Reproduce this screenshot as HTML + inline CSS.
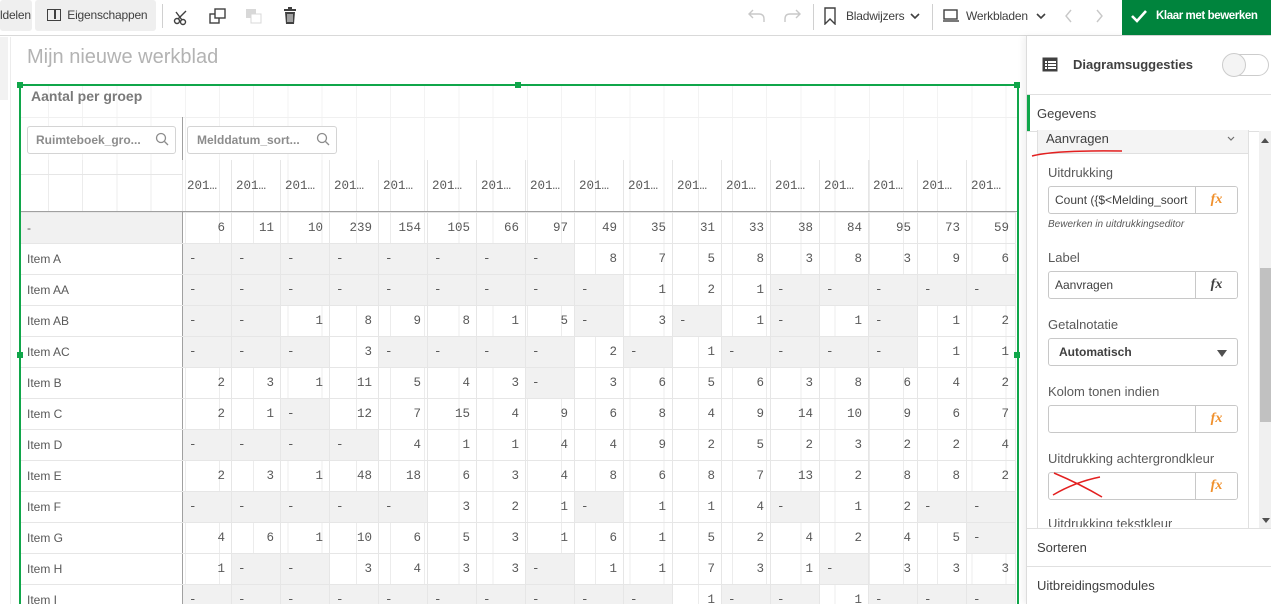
<!DOCTYPE html>
<html><head><meta charset="utf-8">
<style>
*{box-sizing:border-box;margin:0;padding:0}
html,body{width:1271px;height:604px;overflow:hidden}
body{background:#fff;font-family:"Liberation Sans",sans-serif;color:#595959;position:relative}
.abs{position:absolute}
#top{left:0;top:0;width:1271px;height:36px;background:#fff;border-bottom:1px solid #d9d9d9}
.tbtn{position:absolute;top:0;height:31px;background:#efefef;border-radius:3px;font-size:12px;letter-spacing:-0.2px;line-height:31px;color:#404040;white-space:nowrap;overflow:hidden}
#tw{position:absolute;left:20px;top:212px;width:997px;height:392px;overflow:hidden}
#tbl{position:absolute;left:0;top:0;border-collapse:collapse;table-layout:fixed}
#tbl td{height:31px;border:1px solid #e6e6e6;font-family:"Liberation Mono",monospace;font-size:12.5px;text-align:right;padding:0 6px;color:#595959;white-space:nowrap;overflow:hidden}
#tbl td.g{background:#f1f1f1;text-align:left}
#tbl td.n{background:#fff;text-align:left;font-family:"Liberation Sans",sans-serif;font-size:12px;border-right:1px solid #a0a0a0}
#tbl tr.h td.n{background:#f1f1f1}
.hd{position:absolute;top:160px;height:52px;font-family:"Liberation Mono",monospace;font-size:12.5px;line-height:52px;color:#595959;border-left:1px solid #e6e6e6}
.lbl{position:absolute;left:1048px;font-size:13px;color:#595959;white-space:nowrap}
.inp{position:absolute;left:1048px;width:190px;height:28px;border:1px solid #c8c8c8;border-radius:3px;background:#fff;font-size:12px;line-height:26px;padding-left:6px;color:#404040;overflow:hidden;white-space:nowrap}
.fx{position:absolute;right:0;top:0;width:42px;height:26px;border-left:1px solid #c8c8c8;background:#fff;text-align:center;font-family:"Liberation Serif",serif;font-style:italic;font-weight:bold;font-size:14px;line-height:26px;color:#f0902c}
.hdl{position:absolute;width:6px;height:6px;background:#10a64a}
.tt{position:absolute;top:0;line-height:32px;font-size:12px;letter-spacing:-0.3px;color:#404040;font-weight:bold;white-space:nowrap}
</style></head><body>

<div id="top" class="abs">
  <div class="tbtn" style="left:0;width:32px">ldelen</div>
  <div class="tbtn" style="left:35px;width:121px;padding-left:12px">
    <span style="display:inline-block;width:14px;height:12px;border:1.5px solid #404040;vertical-align:-2px;position:relative"><span style="position:absolute;left:6px;top:0;width:1.5px;height:9px;background:#404040"></span></span>&nbsp; Eigenschappen</div>
  <div class="abs" style="left:162px;top:4px;width:1px;height:24px;background:#d0d0d0"></div>
  <svg class="abs" style="left:172px;top:8px" width="18" height="18" viewBox="0 0 18 18" fill="none" stroke="#404040" stroke-width="1.4"><circle cx="5" cy="13" r="2.5"/><circle cx="11" cy="14" r="2.5"/><path d="M6 11 L14 3 M10 12 L4 4"/></svg>
  <svg class="abs" style="left:209px;top:7px" width="18" height="18" viewBox="0 0 18 18" fill="none" stroke="#404040" stroke-width="1.4"><rect x="1" y="7" width="9" height="9"/><rect x="6" y="2" width="10" height="9" fill="#fff"/></svg>
  <svg class="abs" style="left:245px;top:7px" width="18" height="18" viewBox="0 0 18 18"><rect x="1" y="2" width="10" height="9" fill="#d8d8d8"/><rect x="6" y="7" width="10" height="9" fill="#fff" stroke="#d8d8d8"/></svg>
  <svg class="abs" style="left:282px;top:7px" width="16" height="18" viewBox="0 0 16 18" fill="#404040"><rect x="2" y="2" width="12" height="2"/><rect x="6" y="0" width="4" height="2"/><path d="M3 5 H13 L12 17 H4 Z"/><path d="M6 7v8M8 7v8M10 7v8" stroke="#fff" stroke-width="1"/></svg>
  <svg class="abs" style="left:748px;top:8px" width="18" height="16" viewBox="0 0 18 16" fill="none" stroke="#c8c8c8" stroke-width="1.4"><path d="M5 2 L1 6 L5 10 M1 6 H11 Q16 6 16 11 V14"/></svg>
  <svg class="abs" style="left:783px;top:8px" width="18" height="16" viewBox="0 0 18 16" fill="none" stroke="#c8c8c8" stroke-width="1.4"><path d="M13 2 L17 6 L13 10 M17 6 H7 Q2 6 2 11 V14"/></svg>
  <div class="abs" style="left:813px;top:4px;width:1px;height:26px;background:#d0d0d0"></div>
  <svg class="abs" style="left:824px;top:7px" width="12" height="18" viewBox="0 0 12 18" fill="none" stroke="#404040" stroke-width="1.4"><path d="M1 1 H11 V17 L6 12 L1 17 Z"/></svg>
  <div class="tt" style="left:846px;font-weight:normal;letter-spacing:-0.2px">Bladwijzers</div>
  <svg class="abs" style="left:910px;top:12px" width="10" height="8" viewBox="0 0 10 8" fill="none" stroke="#404040" stroke-width="1.6"><path d="M1 2 L5 6 L9 2"/></svg>
  <div class="abs" style="left:932px;top:4px;width:1px;height:26px;background:#d0d0d0"></div>
  <svg class="abs" style="left:942px;top:9px" width="18" height="14" viewBox="0 0 18 14" fill="none" stroke="#404040" stroke-width="1.4"><rect x="2" y="1" width="13" height="9"/><path d="M1 12 H17"/></svg>
  <div class="tt" style="left:966px;font-weight:normal;letter-spacing:-0.2px">Werkbladen</div>
  <svg class="abs" style="left:1036px;top:12px" width="10" height="8" viewBox="0 0 10 8" fill="none" stroke="#404040" stroke-width="1.6"><path d="M1 2 L5 6 L9 2"/></svg>
  <svg class="abs" style="left:1064px;top:9px" width="10" height="14" viewBox="0 0 10 14" fill="none" stroke="#c8c8c8" stroke-width="1.4"><path d="M7 1 L2 7 L7 13"/></svg>
  <svg class="abs" style="left:1094px;top:9px" width="10" height="14" viewBox="0 0 10 14" fill="none" stroke="#c8c8c8" stroke-width="1.4"><path d="M3 1 L8 7 L3 13"/></svg>
  <div class="abs" style="left:1122px;top:0;width:149px;height:35px;background:#00843d"></div>
  <div class="tt" style="left:1156px;color:#fff;font-size:11.5px;letter-spacing:-0.4px">Klaar met bewerken</div>
  <svg class="abs" style="left:1131px;top:9px" width="16" height="14" viewBox="0 0 16 14" fill="none" stroke="#fff" stroke-width="2.6"><path d="M1 7 L6 12 L15 2"/></svg>
</div>

<div class="abs" style="left:0;top:37px;width:8px;height:63px;background:#f2f2f2"></div>
<div class="abs" style="left:10px;top:37px;width:1px;height:567px;background:#ececec"></div>

<div class="abs" style="left:27px;top:46px;font-size:20px;color:#b3b3b3">Mijn nieuwe werkblad</div>

<div class="abs" style="left:20px;top:85px;width:997px;height:519px;background:repeating-linear-gradient(90deg,transparent 0 28px,#ececec 28px 29px,transparent 29px 34.2px);"></div>
<div class="abs" style="left:20px;top:117px;width:997px;height:1px;background:#e6e6e6"></div>
<div class="abs" style="left:20px;top:85px;width:997px;height:75px;background:rgba(255,255,255,0.4)"></div>

<div class="abs" style="left:31px;top:88px;font-size:14px;font-weight:bold;color:#7a7a7a">Aantal per groep</div>

<div class="abs" style="left:27px;top:126px;width:149px;height:28px;border:1px solid #d4d4d4;border-radius:3px;background:#fff;font-size:12px;font-weight:bold;color:#8c8c8c;line-height:26px;padding-left:8px">Ruimteboek_gro...</div>
<div class="abs" style="left:187px;top:126px;width:150px;height:28px;border:1px solid #d4d4d4;border-radius:3px;background:#fff;font-size:12px;font-weight:bold;color:#8c8c8c;line-height:26px;padding-left:9px">Melddatum_sort...</div>
<svg class="abs" style="left:155px;top:132px" width="14" height="14" viewBox="0 0 14 14" fill="none" stroke="#8c8c8c" stroke-width="1.3"><circle cx="6" cy="6" r="4.5"/><path d="M9.5 9.5 L13 13"/></svg>
<svg class="abs" style="left:316px;top:132px" width="14" height="14" viewBox="0 0 14 14" fill="none" stroke="#8c8c8c" stroke-width="1.3"><circle cx="6" cy="6" r="4.5"/><path d="M9.5 9.5 L13 13"/></svg>

<div class="abs" style="left:182px;top:117px;width:1px;height:487px;background:#a0a0a0"></div>
<div class="abs" style="left:20px;top:174px;width:162px;height:1px;background:#e6e6e6"></div>
<div class="hd" style="left:182px;width:49px;padding-left:4px">201…</div>
<div class="hd" style="left:231px;width:49px;padding-left:4px">201…</div>
<div class="hd" style="left:280px;width:49px;padding-left:4px">201…</div>
<div class="hd" style="left:329px;width:49px;padding-left:4px">201…</div>
<div class="hd" style="left:378px;width:49px;padding-left:4px">201…</div>
<div class="hd" style="left:427px;width:49px;padding-left:4px">201…</div>
<div class="hd" style="left:476px;width:49px;padding-left:4px">201…</div>
<div class="hd" style="left:525px;width:49px;padding-left:4px">201…</div>
<div class="hd" style="left:574px;width:49px;padding-left:4px">201…</div>
<div class="hd" style="left:623px;width:49px;padding-left:4px">201…</div>
<div class="hd" style="left:672px;width:49px;padding-left:4px">201…</div>
<div class="hd" style="left:721px;width:49px;padding-left:4px">201…</div>
<div class="hd" style="left:770px;width:49px;padding-left:4px">201…</div>
<div class="hd" style="left:819px;width:49px;padding-left:4px">201…</div>
<div class="hd" style="left:868px;width:49px;padding-left:4px">201…</div>
<div class="hd" style="left:917px;width:49px;padding-left:4px">201…</div>
<div class="hd" style="left:966px;width:49px;padding-left:4px">201…</div>
<div class="abs" style="left:20px;top:211px;width:997px;height:1px;background:#a0a0a0"></div>

<div id="tw">
<table id="tbl">
<colgroup><col style="width:162px"><col span="17" style="width:49px"></colgroup>
<tr class="h"><td class="n">-</td><td>6</td><td>11</td><td>10</td><td>239</td><td>154</td><td>105</td><td>66</td><td>97</td><td>49</td><td>35</td><td>31</td><td>33</td><td>38</td><td>84</td><td>95</td><td>73</td><td>59</td></tr>
<tr><td class="n">Item A</td><td class="g">-</td><td class="g">-</td><td class="g">-</td><td class="g">-</td><td class="g">-</td><td class="g">-</td><td class="g">-</td><td class="g">-</td><td>8</td><td>7</td><td>5</td><td>8</td><td>3</td><td>8</td><td>3</td><td>9</td><td>6</td></tr>
<tr><td class="n">Item AA</td><td class="g">-</td><td class="g">-</td><td class="g">-</td><td class="g">-</td><td class="g">-</td><td class="g">-</td><td class="g">-</td><td class="g">-</td><td class="g">-</td><td>1</td><td>2</td><td>1</td><td class="g">-</td><td class="g">-</td><td class="g">-</td><td class="g">-</td><td class="g">-</td></tr>
<tr><td class="n">Item AB</td><td class="g">-</td><td class="g">-</td><td>1</td><td>8</td><td>9</td><td>8</td><td>1</td><td>5</td><td class="g">-</td><td>3</td><td class="g">-</td><td>1</td><td class="g">-</td><td>1</td><td class="g">-</td><td>1</td><td>2</td></tr>
<tr><td class="n">Item AC</td><td class="g">-</td><td class="g">-</td><td class="g">-</td><td>3</td><td class="g">-</td><td class="g">-</td><td class="g">-</td><td class="g">-</td><td>2</td><td class="g">-</td><td>1</td><td class="g">-</td><td class="g">-</td><td class="g">-</td><td class="g">-</td><td>1</td><td>1</td></tr>
<tr><td class="n">Item B</td><td>2</td><td>3</td><td>1</td><td>11</td><td>5</td><td>4</td><td>3</td><td class="g">-</td><td>3</td><td>6</td><td>5</td><td>6</td><td>3</td><td>8</td><td>6</td><td>4</td><td>2</td></tr>
<tr><td class="n">Item C</td><td>2</td><td>1</td><td class="g">-</td><td>12</td><td>7</td><td>15</td><td>4</td><td>9</td><td>6</td><td>8</td><td>4</td><td>9</td><td>14</td><td>10</td><td>9</td><td>6</td><td>7</td></tr>
<tr><td class="n">Item D</td><td class="g">-</td><td class="g">-</td><td class="g">-</td><td class="g">-</td><td>4</td><td>1</td><td>1</td><td>4</td><td>4</td><td>9</td><td>2</td><td>5</td><td>2</td><td>3</td><td>2</td><td>2</td><td>4</td></tr>
<tr><td class="n">Item E</td><td>2</td><td>3</td><td>1</td><td>48</td><td>18</td><td>6</td><td>3</td><td>4</td><td>8</td><td>6</td><td>8</td><td>7</td><td>13</td><td>2</td><td>8</td><td>8</td><td>2</td></tr>
<tr><td class="n">Item F</td><td class="g">-</td><td class="g">-</td><td class="g">-</td><td class="g">-</td><td class="g">-</td><td>3</td><td>2</td><td>1</td><td class="g">-</td><td>1</td><td>1</td><td>4</td><td class="g">-</td><td>1</td><td>2</td><td class="g">-</td><td class="g">-</td></tr>
<tr><td class="n">Item G</td><td>4</td><td>6</td><td>1</td><td>10</td><td>6</td><td>5</td><td>3</td><td>1</td><td>6</td><td>1</td><td>5</td><td>2</td><td>4</td><td>2</td><td>4</td><td>5</td><td class="g">-</td></tr>
<tr><td class="n">Item H</td><td>1</td><td class="g">-</td><td class="g">-</td><td>3</td><td>4</td><td>3</td><td>3</td><td class="g">-</td><td>1</td><td>1</td><td>7</td><td>3</td><td>1</td><td class="g">-</td><td>3</td><td>3</td><td>3</td></tr>
<tr><td class="n">Item I</td><td class="g">-</td><td class="g">-</td><td class="g">-</td><td class="g">-</td><td class="g">-</td><td class="g">-</td><td class="g">-</td><td class="g">-</td><td class="g">-</td><td class="g">-</td><td>1</td><td class="g">-</td><td class="g">-</td><td>1</td><td class="g">-</td><td class="g">-</td><td class="g">-</td></tr>
</table>
</div>

<div class="abs" style="left:19px;top:84px;width:1000px;height:520px;border:2px solid #10a64a;border-bottom:none"></div>
<div class="hdl" style="left:17px;top:82px"></div>
<div class="hdl" style="left:515px;top:82px"></div>
<div class="hdl" style="left:1014px;top:82px"></div>
<div class="hdl" style="left:17px;top:352px"></div>
<div class="hdl" style="left:1014px;top:352px"></div>

<div class="abs" style="left:1026px;top:36px;width:245px;height:568px;background:#fff;border-left:1px solid #dcdcdc;box-shadow:-3px 0 6px rgba(0,0,0,0.06)"></div>
<svg class="abs" style="left:1042px;top:57px" width="16" height="15" viewBox="0 0 16 15"><rect x="0.5" y="0.5" width="15" height="14" fill="#404040"/><g fill="#fff"><rect x="3" y="4" width="2" height="2"/><rect x="6" y="4" width="8" height="2"/><rect x="3" y="7" width="2" height="2"/><rect x="6" y="7" width="8" height="2"/><rect x="3" y="10" width="2" height="2"/><rect x="6" y="10" width="8" height="2"/></g></svg>
<div class="abs" style="left:1073px;top:57px;font-size:13px;font-weight:bold;color:#404040;white-space:nowrap">Diagramsuggesties</div>
<div class="abs" style="left:1223px;top:54px;width:46px;height:22px;border:1px solid #ccc;border-radius:11px;background:#fff"></div>
<div class="abs" style="left:1222px;top:53px;width:24px;height:24px;border:1px solid #ccc;border-radius:50%;background:#f4f4f4"></div>
<div class="abs" style="left:1027px;top:94px;width:244px;height:1px;background:#e0e0e0"></div>
<div class="abs" style="left:1027px;top:95px;width:3px;height:36px;background:#10a64a"></div>
<div class="abs" style="left:1037px;top:106px;font-size:13px;color:#404040">Gegevens</div>
<div class="abs" style="left:1027px;top:131px;width:244px;height:1px;background:#e0e0e0"></div>

<div class="abs" style="left:1037px;top:130px;width:212px;height:398px;border-left:1px solid #e0e0e0;border-right:1px solid #e0e0e0"></div>
<div class="abs" style="left:1038px;top:130px;width:210px;height:24px;background:#f4f4f4;border-bottom:1px solid #e0e0e0"></div>
<div class="abs" style="left:1046px;top:131px;font-size:13px;color:#404040">Aanvragen</div>
<svg class="abs" style="left:1227px;top:136px" width="8" height="6" viewBox="0 0 8 6" fill="none" stroke="#707070" stroke-width="1.2"><path d="M1 1 L4 4 L7 1"/></svg>
<svg class="abs" style="left:1020px;top:145px" width="110" height="15" viewBox="0 0 110 15" fill="none" stroke="#e32020" stroke-width="1.5"><path d="M12 11 Q35 5 102 6"/></svg>
<div class="abs" style="left:1259px;top:131px;width:12px;height:397px;background:#f0f0f0"></div>
<div class="abs" style="left:1260px;top:268px;width:11px;height:154px;background:#c1c1c1"></div>
<div class="abs" style="left:1261px;top:138px;width:0;height:0;border-left:4px solid transparent;border-right:4px solid transparent;border-bottom:5px solid #505050"></div>
<div class="abs" style="left:1262px;top:518px;width:0;height:0;border-left:4px solid transparent;border-right:4px solid transparent;border-top:5px solid #505050"></div>

<div class="lbl" style="top:165px">Uitdrukking</div>
<div class="inp" style="top:186px">Count ({$&lt;Melding_soort<div class="fx">fx</div></div>
<div class="abs" style="left:1048px;top:219px;font-size:10px;font-style:italic;color:#595959;white-space:nowrap">Bewerken in uitdrukkingseditor</div>
<div class="lbl" style="top:250px">Label</div>
<div class="inp" style="top:271px">Aanvragen<div class="fx" style="color:#404040">fx</div></div>
<div class="lbl" style="top:317px">Getalnotatie</div>
<div class="inp" style="top:338px;font-weight:bold;padding-left:10px">Automatisch<span style="position:absolute;right:10px;top:11px;border-left:5px solid transparent;border-right:5px solid transparent;border-top:7px solid #505050"></span></div>
<div class="lbl" style="top:384px">Kolom tonen indien</div>
<div class="inp" style="top:405px"><div class="fx">fx</div></div>
<div class="lbl" style="top:451px">Uitdrukking achtergrondkleur</div>
<div class="inp" style="top:472px"><div class="fx">fx</div></div>
<svg class="abs" style="left:1050px;top:470px" width="56" height="30" viewBox="0 0 56 30" fill="none" stroke="#e32020" stroke-width="1.5"><path d="M4 3 Q30 14 52 27 M3 25 Q25 12 50 7"/></svg>
<div class="abs" style="left:1048px;top:516px;height:11px;overflow:hidden;font-size:13px;color:#595959;white-space:nowrap">Uitdrukking tekstkleur</div>

<div class="abs" style="left:1027px;top:528px;width:244px;height:1px;background:#e0e0e0"></div>
<div class="abs" style="left:1037px;top:540px;font-size:13px;color:#404040">Sorteren</div>
<div class="abs" style="left:1027px;top:566px;width:244px;height:1px;background:#e0e0e0"></div>
<div class="abs" style="left:1037px;top:578px;font-size:13px;color:#404040">Uitbreidingsmodules</div>
</body></html>
